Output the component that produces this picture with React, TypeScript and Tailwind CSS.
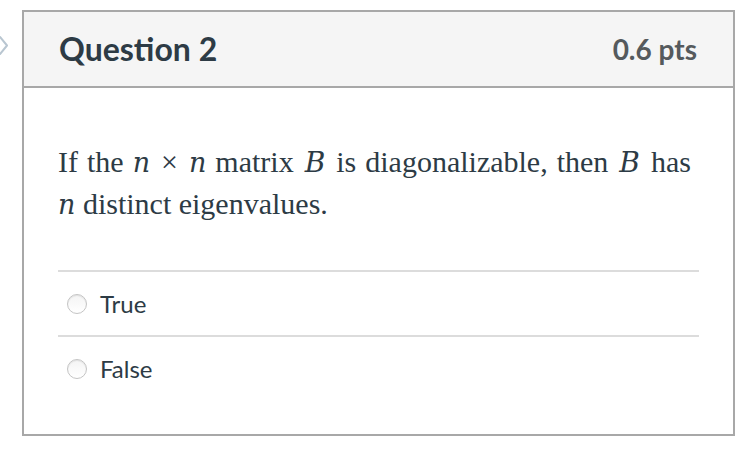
import React from "react";

const serif = { fontFamily: '"Liberation Serif", "Times New Roman", serif' };
const math = { fontFamily: '"DejaVu Serif", "Liberation Serif", serif' };

function N() {
  return (
    <i className="text-[27px]" style={math}>
      n
    </i>
  );
}

function B() {
  return (
    <i className="text-[28px] px-[2px]" style={math}>
      B
    </i>
  );
}

function Radio() {
  return (
    <span className="inline-block w-[20px] h-[20px] shrink-0 rounded-full border border-[#c4c4c4] bg-gradient-to-b from-[#f4f4f4] to-white shadow-[inset_0_1px_1px_rgba(0,0,0,0.08)]" />
  );
}

export default function App() {
  return (
    <div className="w-[754px] h-[452px] bg-white overflow-hidden flex" style={{ fontFamily: 'Lato, "Open Sans", sans-serif' }}>
      <div className="w-[22px] shrink-0 pt-[35px]">
        <svg width="22" height="22" viewBox="0 0 22 22" className="block">
          <path d="M-12 2 H0 L7 10.5 L0 19 H-12 Z" fill="white" stroke="#b9c6d1" strokeWidth="2" strokeLinejoin="round" />
        </svg>
      </div>
      <div className="mt-[10px] w-[713px] h-[426px] border-2 border-[#a8a8a8] flex flex-col">
        <div className="h-[76px] shrink-0 bg-[#f5f5f5] border-b-2 border-[#a8a8a8] flex items-center justify-between pl-[35px] pr-[36px]">
          <span className="text-[32px] font-bold text-[#2d3b45]">Question 2</span>
          <span className="text-[28px] font-bold text-[#555a5d]">0.6 pts</span>
        </div>
        <div className="px-[34px] pt-[53px]">
          <p className="text-[30px] leading-[41px] text-[#2d3b45] m-0" style={serif}>
            <span className="whitespace-nowrap [word-spacing:1.5px]">
              If the <N /> <span className="mx-[2px]">×</span> <N /> matrix <B /> is diagonalizable, then <B /> has
            </span>
            <br />
            <N /> distinct eigenvalues.
          </p>
          <div className="mt-[45px]">
            <div className="h-[65px] border-t-2 border-[#dcdcdc] flex items-center pl-[9px] gap-[13px]">
              <Radio />
              <span className="text-[24px] text-[#2d3b45]">True</span>
            </div>
            <div className="h-[65px] border-t-2 border-[#dcdcdc] flex items-center pl-[9px] gap-[13px]">
              <Radio />
              <span className="text-[24px] text-[#2d3b45]">False</span>
            </div>
          </div>
        </div>
      </div>
    </div>
  );
}
